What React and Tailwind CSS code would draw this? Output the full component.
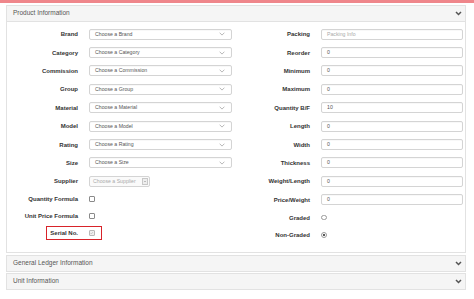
import React from "react";

const Chevron = ({ thin }) =>
  thin ? (
    <svg width="6" height="4" viewBox="0 0 6 4" className="shrink-0">
      <path d="M0.6 0.7 L3 3.1 L5.4 0.7" fill="none" stroke="#9a9a9a" strokeWidth="0.7" />
    </svg>
  ) : (
    <svg width="7" height="5" viewBox="0 0 7 5" className="shrink-0">
      <path d="M1 1 L3.5 3.5 L6 1" fill="none" stroke="#555" strokeWidth="1.5" />
    </svg>
  );

const Label = ({ children, w = "w-[71px]" }) => (
  <div className={`${w} shrink-0 text-right text-[6px] font-bold text-[#333] leading-none`}>{children}</div>
);

const Select = ({ text }) => (
  <div className="w-[143px] h-[11px] border border-[#d4d4d4] rounded-[2px] bg-white flex items-center justify-between pl-[5px] pr-[6px] shadow-[inset_0_0.5px_1px_rgba(0,0,0,0.06)]">
    <span className="text-[5.2px] text-[#555] leading-none">{text}</span>
    <Chevron thin />
  </div>
);

const Input = ({ value, placeholder }) => (
  <div className="w-[142px] h-[11px] border border-[#d4d4d4] rounded-[2px] bg-white flex items-center pl-[5px] shadow-[inset_0_0.5px_1px_rgba(0,0,0,0.06)]">
    <span className={`text-[5.2px] leading-none ${placeholder ? "text-[#aaa]" : "text-[#555]"}`}>
      {placeholder || value}
    </span>
  </div>
);

const Check = ({ checked }) => (
  <div
    className={`w-[5.5px] h-[5.5px] border rounded-[1px] ${
      checked ? "border-[#b8b8b8] bg-[#eeeeee]" : "border-[#8a8a8a] bg-white"
    } flex items-center justify-center`}
  >
    {checked && (
      <svg width="4" height="4" viewBox="0 0 4 4">
        <path d="M0.6 2 L1.6 3 L3.4 0.9" fill="none" stroke="#aaa" strokeWidth="0.6" />
      </svg>
    )}
  </div>
);

const Radio = ({ on }) => (
  <div className="w-[5.5px] h-[5.5px] rounded-full border border-[#9a9a9a] bg-white flex items-center justify-center">
    {on && <div className="w-[2.5px] h-[2.5px] rounded-full bg-[#222]" />}
  </div>
);

const AccHeader = ({ title, className = "" }) => (
  <div className={`h-[17px] border border-[#e2e2e2] bg-[#f5f5f5] flex items-center justify-between pl-[6px] pr-[3px] ${className}`}>
    <span className="text-[6.5px] text-[#555] leading-none">{title}</span>
    <Chevron />
  </div>
);

export default function App() {
  const selects = [
    ["Brand", "Choose a Brand"],
    ["Category", "Choose a Category"],
    ["Commission", "Choose a Commission"],
    ["Group", "Choose a Group"],
    ["Material", "Choose a Material"],
    ["Model", "Choose a Model"],
    ["Rating", "Choose a Rating"],
    ["Size", "Choose a Size"],
  ];
  const inputs = [
    ["Packing", "", "Packing Info"],
    ["Reorder", "0"],
    ["Minimum", "0"],
    ["Maximum", "0"],
    ["Quantity B/F", "10"],
    ["Length", "0"],
    ["Width", "0"],
    ["Thickness", "0"],
    ["Weight/Length", "0"],
    ["Price/Weight", "0"],
  ];

  return (
    <div className="w-[474px] h-[299px] bg-white overflow-hidden font-['Liberation_Sans',Arial,sans-serif]">
      <div className="h-[3px] bg-[#ef868b]" />
      <div className="ml-[6px] w-[460px] mt-[2px]">
        <AccHeader title="Product Information" />
        <div className="border-x border-b border-[#e2e2e2] pt-[3px] pb-[8px] flex">
          <div className="w-[229px] flex flex-col">
            {selects.map(([l, t]) => (
              <div key={l} className="h-[18.4px] flex items-center gap-[11px]">
                <Label>{l}</Label>
                <Select text={t} />
              </div>
            ))}
            <div className="h-[18.4px] flex items-center gap-[11px]">
              <Label>Supplier</Label>
              <div className="w-[61px] h-[11px] border border-[#d4d4d4] rounded-[2px] bg-[#fafafa] flex items-center justify-between pl-[3px] pr-[1px]">
                <span className="text-[5.2px] text-[#aaa] leading-none">Choose a Supplier</span>
                <div className="w-[6px] h-[7px] border border-[#c8c8c8] bg-[#eee] flex items-center justify-center">
                  <div className="w-0 h-0 border-l-[1.3px] border-r-[1.3px] border-t-[1.6px] border-l-transparent border-r-transparent border-t-[#888]" />
                </div>
              </div>
            </div>
            <div className="h-[17px] flex items-center gap-[11px]">
              <Label>Quantity Formula</Label>
              <Check />
            </div>
            <div className="h-[17px] flex items-center gap-[11px]">
              <Label>Unit Price Formula</Label>
              <Check />
            </div>
            <div className="h-[17px] flex items-center gap-[11px] relative">
              <Label>Serial No.</Label>
              <Check checked />
              <div className="absolute left-[39px] top-[1.5px] w-[56px] h-[14px] border-[1.5px] border-[#d8232a]" />
            </div>
          </div>
          <div className="flex-1 flex flex-col">
            {inputs.map(([l, v, p]) => (
              <div key={l} className="h-[18.4px] flex items-center gap-[11px]">
                <Label w="w-[74px]">{l}</Label>
                <Input value={v} placeholder={p} />
              </div>
            ))}
            <div className="h-[17.5px] flex items-center gap-[11px]">
              <Label w="w-[74px]">Graded</Label>
              <Radio />
            </div>
            <div className="h-[17.5px] flex items-center gap-[11px]">
              <Label w="w-[74px]">Non-Graded</Label>
              <Radio on />
            </div>
          </div>
        </div>
        <AccHeader title="General Ledger Information" className="mt-[2px]" />
        <AccHeader title="Unit Information" className="mt-[1px]" />
      </div>
    </div>
  );
}
